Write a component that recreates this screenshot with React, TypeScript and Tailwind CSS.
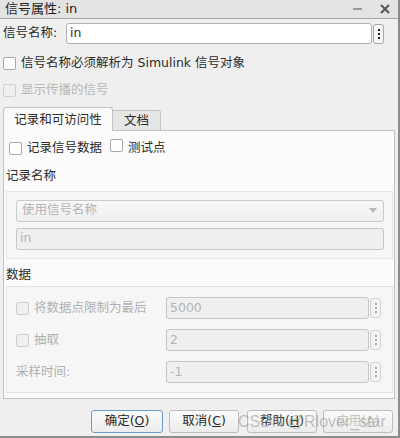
import React from "react";

const font = { fontFamily: "'DejaVu Sans', 'Noto Sans CJK SC', sans-serif" };

function Check({ disabled }: { disabled?: boolean }) {
  return (
    <span
      className={
        "inline-block w-[13px] h-[13px] rounded-[2px] border shrink-0 " +
        (disabled ? "bg-[#efefef] border-[#cfcfcf]" : "bg-white border-[#a8a8a8]")
      }
    />
  );
}

function Dots({ dim }: { dim?: boolean }) {
  return (
    <div
      className={
        "w-[11px] h-[20px] rounded-[3px] border flex flex-col items-center justify-center gap-[2px] shrink-0 " +
        (dim ? "border-[#d2d2d2] bg-[#f4f4f4]" : "border-[#a8a8a8] bg-[#f6f6f6]")
      }
    >
      {[0, 1, 2].map((i) => (
        <span key={i} className={"w-[2px] h-[2px] " + (dim ? "bg-[#a8a8a8]" : "bg-[#222]")} />
      ))}
    </div>
  );
}

function DataRow({ label, value, check }: { label: string; value: string; check?: boolean }) {
  return (
    <div className="flex items-center h-[22px]">
      <div className="w-[150px] flex items-center gap-[5px] text-[#b0b0b0]">
        {check && <Check disabled />}
        <span>{label}</span>
      </div>
      <div className="w-[203px] h-[22px] rounded-[3px] border border-[#c6c6c6] bg-[#efefef] flex items-center px-[3px] text-[#b4b4b4]">
        {value}
      </div>
      <div className="ml-[1px]">
        <Dots dim />
      </div>
    </div>
  );
}

function Btn({ label, u, focus, disabled }: { label: string; u: string; focus?: boolean; disabled?: boolean }) {
  return (
    <div
      className={
        "h-[23px] rounded-[3px] border flex items-center justify-center bg-gradient-to-b from-[#fbfbfb] to-[#ececec] " +
        (focus ? "border-[#6c9bd0] w-[72px]" : "border-[#bdbdbd] w-[70px]") +
        (disabled ? " text-[#c4c4c4]" : " text-[#2a2a2a]")
      }
    >
      {label}(<span className="underline">{u}</span>)
    </div>
  );
}

export default function App() {
  return (
    <div
      className="relative w-[400px] h-[438px] bg-[#efefef] border-r-2 border-b-2 border-[#8c8c8c] text-[12.5px] text-[#2b2b2b] overflow-hidden"
      style={font}
    >
      {/* title bar */}
      <div className="h-[19px] bg-[#e3e3e3] border-b border-[#a6a6a6] flex items-center px-[5px]">
        <span className="text-[13px] text-[#1e1e1e]">信号属性: in</span>
        <span className="ml-auto mr-[18px] w-[9px] h-[1.5px] bg-[#9a9a9a]" />
        <svg width="10" height="10" viewBox="0 0 10 10" className="mr-[3px]">
          <path d="M1 1 L9 9 M9 1 L1 9" stroke="#555" strokeWidth="2" />
        </svg>
      </div>

      <div className="px-[3px]">
        {/* name */}
        <div className="mt-[4px] flex items-center h-[21px]">
          <span className="w-[63px]">信号名称:</span>
          <div className="w-[306px] h-[21px] bg-white border border-[#b0b0b0] rounded-[3px] flex items-center px-[3px]">
            in
          </div>
          <div className="ml-[1px]">
            <Dots />
          </div>
        </div>

        <div className="mt-[8px] h-[22px] flex items-center gap-[5px]">
          <Check />
          <span>信号名称必须解析为 Simulink 信号对象</span>
        </div>

        <div className="mt-[5px] h-[22px] flex items-center gap-[5px] text-[#b8b8b8]">
          <Check disabled />
          <span>显示传播的信号</span>
        </div>

        {/* tabs */}
        <div className="mt-[6px] flex items-end h-[23px]">
          <div className="w-[110px] h-[24px] -mb-[1px] pt-[2px] bg-[#fbfbfb] border border-b-0 border-[#c2c2c2] rounded-t-[3px] flex items-center justify-center relative z-10">
            记录和可访问性
          </div>
          <div className="w-[48px] h-[20px] pt-[1px] bg-[#e6e6e6] border border-b-0 border-l-0 border-[#c2c2c2] rounded-tr-[3px] flex items-center justify-center">
            文档
          </div>
        </div>

        {/* panel */}
        <div className="w-[392px] h-[269px] bg-[#fbfbfb] border border-[#c2c2c2] px-[2px]">
          <div className="mt-[10px] h-[14px] flex items-center px-[3px]">
            <Check />
            <span className="ml-[5px]">记录信号数据</span>
            <span className="ml-[8px]">
              <Check />
            </span>
            <span className="ml-[5px]">测试点</span>
          </div>

          <div className="mt-[15px] leading-none">记录名称</div>

          <div className="mt-[8px] w-[387px] h-[68px] border border-[#e4e4e4] bg-[#f6f6f6] pt-[8px] pl-[9px]">
            <div className="w-[368px] h-[22px] rounded-[3px] border border-[#cacaca] bg-gradient-to-b from-[#f8f8f8] to-[#efefef] flex items-center px-[5px] text-[#b4b4b4]">
              使用信号名称
              <svg width="8" height="5" viewBox="0 0 8 5" className="ml-auto mr-[1px]">
                <path d="M0 0 L8 0 L4 5 Z" fill="#b8b8b8" />
              </svg>
            </div>
            <div className="mt-[6px] w-[368px] h-[22px] rounded-[3px] border border-[#c6c6c6] bg-[#efefef] flex items-center px-[3px] text-[#b4b4b4]">
              in
            </div>
          </div>

          <div className="mt-[10px] leading-none">数据</div>

          <div className="mt-[5px] w-[387px] h-[107px] border border-[#e4e4e4] bg-[#f6f6f6] pt-[10px] pl-[9px] flex flex-col gap-[10px]">
            <DataRow label="将数据点限制为最后" value="5000" check />
            <DataRow label="抽取" value="2" check />
            <DataRow label="采样时间:" value="-1" />
          </div>
        </div>

        {/* buttons */}
        <div className="mt-[11px] flex items-center">
          <div className="ml-[88px]">
            <Btn label="确定" u="O" focus />
          </div>
          <div className="ml-[6px]">
            <Btn label="取消" u="C" />
          </div>
          <div className="ml-[8px]">
            <Btn label="帮助" u="H" />
          </div>
          <div className="ml-[6px]">
            <Btn label="应用" u="A" disabled />
          </div>
        </div>
      </div>

      {/* watermark */}
      <div
        className="absolute left-[238px] top-[410px] text-[16px] text-[#9a9a9a]/60 pointer-events-none"
        style={{ fontFamily: "'Liberation Sans', sans-serif" }}
      >
        CSDN @Rlover_star
      </div>
    </div>
  );
}
